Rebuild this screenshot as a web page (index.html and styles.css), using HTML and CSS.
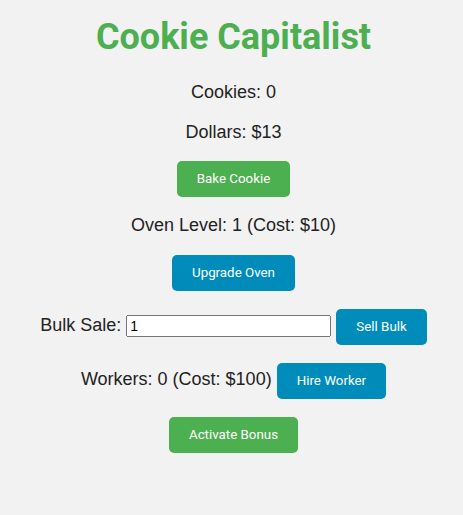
FILE: index.html
```html
<!DOCTYPE html>
<html lang="en">
<head>
    <meta charset="UTF-8">
    <meta name="viewport" content="width=device-width, initial-scale=1.0">
    <title>Cookie Capitalist</title>
    <link rel="stylesheet" href="styles.css">
</head>
<body>
    <h1>Cookie Capitalist</h1>

    <p>Cookies: <span id="cookies">0</span></p>
    <p>Dollars: $<span id="dollars">13</span></p>
    <div class="row">
        <button class="btn green" id="bake">Bake Cookie</button>
    </div>

    <p>Oven Level: <span id="ovenLevel">1</span> (Cost: $<span id="ovenCost">10</span>)</p>
    <div class="row">
        <button class="btn blue" id="upgradeOven">Upgrade Oven</button>
    </div>

    <div class="row">
        <label for="bulkAmount">Bulk Sale:</label>
        <input type="text" id="bulkAmount" value="1">
        <button class="btn blue" id="sellBulk">Sell Bulk</button>
    </div>

    <div class="row">
        Workers: <span id="workers">0</span> (Cost: $<span id="workerCost">100</span>)
        <button class="btn blue" id="hireWorker">Hire Worker</button>
    </div>

    <div class="row">
        <button class="btn green" id="bonus">Activate Bonus</button>
    </div>
</body>
</html>
```

FILE: styles.css
```css
body {
    font-family: 'Liberation Sans', Arial, sans-serif;
    font-size: 18px;
    background-color: #f2f2f2;
    color: #222;
    text-align: center;
    margin: 0;
    padding: 8px 6px 8px 10px;
}

h1 {
    font-family: Roboto, sans-serif;
    font-size: 36px;
    color: #4CAF50;
    margin: 8px 0 24.4px;
}

p, .row {
    margin: 18px 0;
}

p {
    line-height: 21.5px;
}

.btn {
    font-family: Roboto, sans-serif;
    font-size: 13.333px;
    line-height: 16px;
    color: white;
    border: none;
    border-radius: 5px;
    padding: 10px 20px;
    cursor: pointer;
}

.green {
    background-color: #4CAF50;
}

.blue {
    background-color: #008CBA;
}

.btn:hover {
    opacity: 0.9;
}

input {
    font-family: 'Liberation Sans', Arial, sans-serif;
    font-size: 14px;
    width: 197px;
}
```
